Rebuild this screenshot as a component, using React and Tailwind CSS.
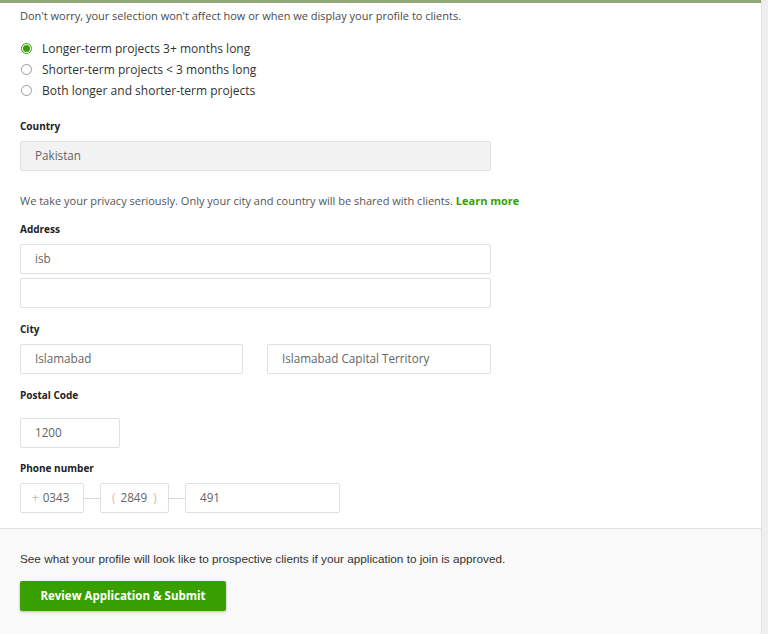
import React, { useState } from 'react';

const font = { fontFamily: '"Open Sans", "Liberation Sans", sans-serif' };

const Label = ({ children }) => (
  <div className="text-[10px] font-bold text-[#222] leading-[14px]">{children}</div>
);

const Field = ({ value, className = '', disabled = false }) => (
  <div
    className={`h-[30px] border border-[#e0e0e0] rounded-[2px] flex items-center px-[14px] text-[11.7px] text-[#656565] ${
      disabled ? 'bg-[#f2f2f2]' : 'bg-white'
    } ${className}`}
  >
    {value}
  </div>
);

const Radio = ({ checked, label, onClick }) => (
  <label className="flex items-center h-[21px] cursor-pointer" onClick={onClick}>
    <span className="w-[12px] flex justify-center ml-[20px] mr-[10px]">
      {checked ? (
        <span className="w-[11px] h-[11px] rounded-full border border-[#37a000] flex items-center justify-center">
          <span className="w-[7px] h-[7px] rounded-full bg-[#37a000]" />
        </span>
      ) : (
        <span className="w-[11px] h-[11px] rounded-full border border-[#9a9a9a] bg-white" />
      )}
    </span>
    <span className="text-[12px] text-[#333]">{label}</span>
  </label>
);

const App = () => {
  const [choice, setChoice] = useState(0);
  const options = [
    'Longer-term projects 3+ months long',
    'Shorter-term projects < 3 months long',
    'Both longer and shorter-term projects',
  ];

  return (
    <div className="w-[768px] h-[634px] flex bg-[#efefef] overflow-hidden" style={font}>
      <div className="w-[761px] flex flex-col bg-white border-t-[3px] border-[#8fa876]">
        <div className="flex-1 pb-[15px]">
          <p className="px-[20px] pt-[5px] text-[11px] leading-[15px] text-[#4a4a4a]">
            Don't worry, your selection won't affect how or when we display your profile to clients.
          </p>

          <div className="mt-[15px] flex flex-col">
            {options.map((o, i) => (
              <Radio key={o} label={o} checked={choice === i} onClick={() => setChoice(i)} />
            ))}
          </div>

          <div className="px-[20px]">
            <div className="mt-[18px]">
              <Label>Country</Label>
            </div>
            <Field value="Pakistan" disabled className="mt-[8px] w-[471px]" />

            <p className="mt-[22px] text-[11px] leading-[15px] text-[#555]">
              We take your privacy seriously. Only your city and country will be shared with clients.{' '}
              <span className="text-[#37a000] font-bold">Learn more</span>
            </p>

            <div className="mt-[14px]">
              <Label>Address</Label>
            </div>
            <Field value="isb" className="mt-[8px] w-[471px]" />
            <Field value="" className="mt-[4px] w-[471px]" />

            <div className="mt-[14px]">
              <Label>City</Label>
            </div>
            <div className="mt-[8px] flex gap-[24px]">
              <Field value="Islamabad" className="w-[223px]" />
              <Field value="Islamabad Capital Territory" className="w-[224px]" />
            </div>

            <div className="mt-[14px]">
              <Label>Postal Code</Label>
            </div>
            <Field value="1200" className="mt-[16px] w-[100px]" />

            <div className="mt-[13px]">
              <Label>Phone number</Label>
            </div>
            <div className="mt-[8px] flex items-center">
              <div className="h-[30px] w-[64px] border border-[#e0e0e0] rounded-[2px] flex items-center pl-[11px] text-[11.7px] text-[#656565]">
                <span className="text-[#bbb] mr-[4px]">+</span>0343
              </div>
              <div className="w-[16px] h-px bg-[#d8d8d8]" />
              <div className="h-[30px] w-[69px] border border-[#e0e0e0] rounded-[2px] flex items-center pl-[11px] text-[11.7px] text-[#656565]">
                <span className="text-[#d9b8a8] mr-[5px]">(</span>2849<span className="text-[#d9b8a8] ml-[6px]">)</span>
              </div>
              <div className="w-[16px] h-px bg-[#d8d8d8]" />
              <div className="h-[30px] w-[155px] border border-[#e0e0e0] rounded-[2px] flex items-center pl-[14px] text-[11.7px] text-[#656565]">
                491
              </div>
            </div>
          </div>
        </div>

        <div className="h-[106px] shrink-0 bg-[#f9f9f9] border-t border-[#e0e0e0] px-[20px] pt-[22px]">
          <p
            className="text-[11.75px] leading-[15px] text-[#333]"
            style={{ fontFamily: '"Liberation Sans", Arial, sans-serif' }}
          >
            See what your profile will look like to prospective clients if your application to join is approved.
          </p>
          <button className="mt-[15px] w-[206px] h-[30px] bg-[#37a000] rounded-[2px] text-white text-[11.5px] font-bold shadow-[0_1px_3px_rgba(0,0,0,0.25)]">
            Review Application &amp; Submit
          </button>
        </div>
      </div>
      <div className="flex-1 border-l border-[#e2e2e2]" />
    </div>
  );
};

export default App;
